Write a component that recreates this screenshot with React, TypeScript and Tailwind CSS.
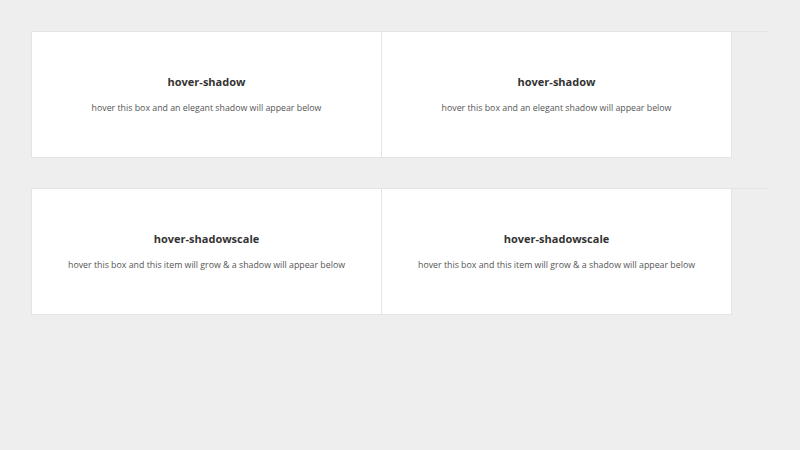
import React from 'react';

const Box: React.FC<{ title: string; text: string; last?: boolean }> = ({ title, text, last }) => (
  <div
    className={`h-[126px] bg-white flex flex-col items-center justify-center border-b border-l border-[#e4e4e4] ${
      last ? 'w-[351px] border-r' : 'w-[350px]'
    }`}
  >
    <h3 className="text-[11px] font-bold text-[#333] leading-none">{title}</h3>
    <p className="mt-[17px] text-[8.8px] text-[#555] leading-none">{text}</p>
  </div>
);

const App: React.FC = () => {
  return (
    <div
      className="w-[800px] h-[450px] bg-[#eeeeee] pt-[31px] pl-[31px] flex flex-col gap-[30px]"
      style={{ fontFamily: '"Open Sans", sans-serif' }}
    >
      {/* hover-shadow */}
      <div className="w-[737px] flex border-t border-[#e4e4e4]">
        <Box title="hover-shadow" text="hover this box and an elegant shadow will appear below" />
        <Box title="hover-shadow" text="hover this box and an elegant shadow will appear below" last />
      </div>

      {/* hover-shadowscale */}
      <div className="w-[737px] flex border-t border-[#e4e4e4]">
        <Box title="hover-shadowscale" text="hover this box and this item will grow & a shadow will appear below" />
        <Box title="hover-shadowscale" text="hover this box and this item will grow & a shadow will appear below" last />
      </div>
    </div>
  );
};

export default App;
